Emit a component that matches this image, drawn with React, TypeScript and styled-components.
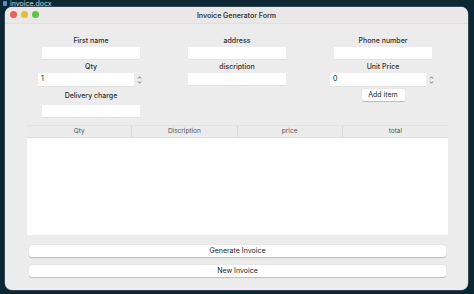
import React from "react";
import styled, { createGlobalStyle } from "styled-components";

const Global = createGlobalStyle`
  html, body { margin: 0; padding: 0; }
  body {
    width: 474px; height: 294px; overflow: hidden;
    background: #0c2734;
    font-family: "Inter", "Liberation Sans", Arial, sans-serif;
  }
`;

const Desktop = styled.div`
  position: relative;
  width: 474px;
  height: 294px;
  display: flex;
  flex-direction: column;
`;

const FileStrip = styled.div`
  height: 7px;
  overflow: hidden;
  display: flex;
  align-items: flex-start;
  gap: 3px;
  padding-left: 3px;
  font-size: 7px;
  line-height: 7px;
  color: #c9d6dc;
`;

const FileIcon = styled.span`
  width: 4px;
  height: 5px;
  margin-top: 1px;
  background: #5b8cc4;
  border-radius: 1px;
`;

const Window = styled.div`
  margin-left: 5px;
  width: 463px;
  height: 283px;
  background: #ececec;
  border-radius: 7px;
  overflow: hidden;
  display: flex;
  flex-direction: column;
  box-shadow: 0 0 0 0.5px #5a6a72;
`;

const TitleBar = styled.div`
  position: relative;
  height: 16px;
  flex: none;
  display: flex;
  align-items: center;
  justify-content: center;
  background: #e9e7e7;
  border-bottom: 1px solid #e0e0e0;
  font-size: 7px;
  font-weight: 600;
  color: #3a3a3a;
`;

const Lights = styled.div`
  position: absolute;
  left: 5px;
  top: 4px;
  display: flex;
  gap: 4px;
`;

const Light = styled.span<{ $c: string }>`
  width: 7px;
  height: 7px;
  border-radius: 50%;
  background: ${(p) => p.$c};
`;

const FormGrid = styled.div`
  display: grid;
  grid-template-columns: repeat(3, 146px);
  padding: 12px 0 0 13px;
`;

const Field = styled.div<{ $h: number }>`
  height: ${(p) => p.$h}px;
  display: flex;
  flex-direction: column;
  align-items: center;
`;

const Label = styled.div<{ $gap?: number }>`
  font-size: 7px;
  line-height: 10px;
  color: #2e2e2e;
  font-weight: 500;
  height: ${(p) => 11 + (p.$gap ?? 0)}px;
`;

const Input = styled.div`
  width: 98px;
  height: 12px;
  background: #fff;
  box-shadow: 0 0.5px 0 #d8d8d8;
  font-size: 7px;
  line-height: 12px;
  color: #222;
  padding-left: 3px;
  box-sizing: border-box;
`;

const Spin = styled.div`
  display: flex;
  align-items: center;
  gap: 3px;
  margin-left: -2px;
`;

const SpinInput = styled(Input)`
  width: 96px;
  height: 13px;
`;

const Arrows = styled.svg`
  width: 5px;
  height: 10px;
`;

const SmallButton = styled.div`
  margin-top: -2px;
  width: 43px;
  height: 12px;
  background: #fff;
  border-radius: 2px;
  box-shadow: 0 0.5px 1px rgba(0, 0, 0, 0.2);
  font-size: 7px;
  line-height: 12px;
  text-align: center;
  color: #222;
`;

const Table = styled.div`
  margin: 4px 0 0 22px;
  width: 421px;
  height: 110px;
  background: #fff;
  display: flex;
  flex-direction: column;
`;

const HeaderRow = styled.div`
  display: grid;
  grid-template-columns: repeat(4, 1fr);
  height: 11px;
  background: #ebebeb;
  border-top: 1px solid #e2e2e2;
  border-bottom: 1px solid #dedede;
`;

const HeadCell = styled.div<{ $last?: boolean }>`
  font-size: 6.5px;
  line-height: 11px;
  text-align: center;
  color: #555;
  border-right: ${(p) => (p.$last ? "none" : "1px solid #d8d8d8")};
`;

const Actions = styled.div`
  display: flex;
  flex-direction: column;
  gap: 8px;
  margin: 10px 0 0 24px;
`;

const WideButton = styled.div`
  width: 417px;
  height: 12px;
  background: #fff;
  border-radius: 3px;
  box-shadow: 0 0.5px 1px rgba(0, 0, 0, 0.2);
  font-size: 7px;
  line-height: 12px;
  text-align: center;
  color: #222;
`;

const SpinArrows = () => (
  <Arrows viewBox="0 0 5 10">
    <path d="M1 3.5 L2.5 1.8 L4 3.5" fill="none" stroke="#555" strokeWidth="0.8" />
    <path d="M1 6.5 L2.5 8.2 L4 6.5" fill="none" stroke="#555" strokeWidth="0.8" />
  </Arrows>
);

export default function App() {
  return (
    <Desktop>
      <Global />
      <FileStrip>
        <FileIcon />
        <span>invoice.docx</span>
      </FileStrip>
      <Window>
        <TitleBar>
          <Lights>
            <Light $c="#ec5f58" />
            <Light $c="#e6bc3a" />
            <Light $c="#5cc443" />
          </Lights>
          Invoice Generator Form
        </TitleBar>
        <FormGrid>
          <Field $h={26}>
            <Label>First name</Label>
            <Input />
          </Field>
          <Field $h={26}>
            <Label>address</Label>
            <Input />
          </Field>
          <Field $h={26}>
            <Label>Phone number</Label>
            <Input />
          </Field>
          <Field $h={29}>
            <Label>Qty</Label>
            <Spin>
              <SpinInput>1</SpinInput>
              <SpinArrows />
            </Spin>
          </Field>
          <Field $h={29}>
            <Label>discription</Label>
            <Input />
          </Field>
          <Field $h={29}>
            <Label>Unit Price</Label>
            <Spin>
              <SpinInput>0</SpinInput>
              <SpinArrows />
            </Spin>
          </Field>
          <Field $h={30}>
            <Label $gap={3}>Delivery charge</Label>
            <Input />
          </Field>
          <Field $h={30} />
          <Field $h={30}>
            <SmallButton>Add item</SmallButton>
          </Field>
        </FormGrid>
        <Table>
          <HeaderRow>
            <HeadCell>Qty</HeadCell>
            <HeadCell>Discription</HeadCell>
            <HeadCell>price</HeadCell>
            <HeadCell $last>total</HeadCell>
          </HeaderRow>
        </Table>
        <Actions>
          <WideButton>Generate Invoice</WideButton>
          <WideButton>New Invoice</WideButton>
        </Actions>
      </Window>
    </Desktop>
  );
}
